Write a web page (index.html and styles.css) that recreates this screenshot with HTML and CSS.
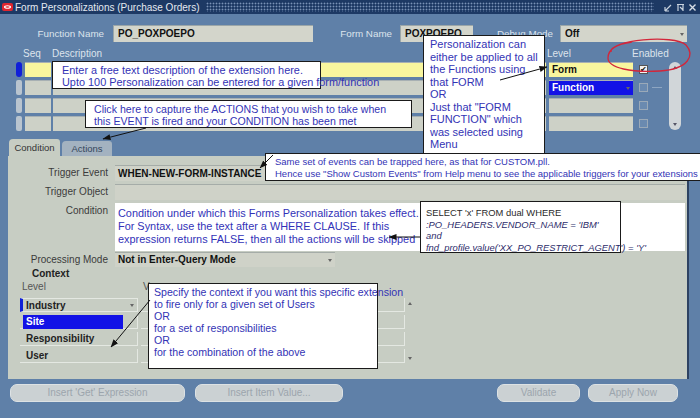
FILE: index.html
```html
<!DOCTYPE html>
<html>
<head>
<meta charset="utf-8">
<title>Form Personalizations</title>
<link rel="stylesheet" href="styles.css">
</head>
<body>
<div class="window">
  <div class="titlebar">
    <svg class="logo" width="11" height="8" viewBox="0 0 11 8"><rect x="0" y="0" width="11" height="8" rx="2" fill="#e0262f"/><ellipse cx="5.5" cy="4" rx="3.6" ry="1.8" fill="#fff"/><ellipse cx="5.5" cy="4" rx="2.2" ry="0.8" fill="#e0262f"/></svg>
    <span class="title">Form Personalizations (Purchase Orders)</span>
    <span class="dots"></span>
    <span class="ctl">
      <svg width="9" height="9" viewBox="0 0 9 9"><path d="M1 8 L7 2 M1 8 H5 M1 8 V4" stroke="#c9d3df" stroke-width="1.2" fill="none"/></svg>
      <svg width="9" height="9" viewBox="0 0 9 9"><path d="M1 1.5 H8 M2 1.5 V8 M7 1.5 V8 M4 4 L7 7" stroke="#c9d3df" stroke-width="1.2" fill="none"/></svg>
      <svg width="9" height="9" viewBox="0 0 9 9"><path d="M1.5 1.5 L7.5 7.5 M7.5 1.5 L1.5 7.5" stroke="#d7dee7" stroke-width="1.4" fill="none"/></svg>
    </span>
  </div>

  <div class="toprow">
    <span class="lbl l-fn">Function Name</span>
    <div class="field f-fn">PO_POXPOEPO</div>
    <span class="lbl l-fm">Form Name</span>
    <div class="field f-fm">POXPOEPO</div>
    <span class="lbl l-dm">Debug Mode</span>
    <div class="field f-dm">Off<span class="dd"></span></div>
  </div>

  <div class="table">
    <div class="cols">
      <div class="thead">
        <span class="h-seq">Seq</span>
        <span class="h-desc">Description</span>
        <span class="h-level">Level</span>
        <span class="h-en">Enabled</span>
      </div>
      <div class="trow">
        <span class="ind cur"></span>
        <span class="cell seq yellow"></span>
        <span class="cell desc yellow"></span>
        <span class="cell level yellow bold">Form</span>
        <span class="en"><span class="cb checked">&#10004;</span></span>
      </div>
      <div class="trow">
        <span class="ind"></span>
        <span class="cell seq"></span>
        <span class="cell desc"></span>
        <span class="cell level sel bold">Function<span class="dd"></span></span>
        <span class="en"><span class="cb"></span><span class="dash"></span></span>
      </div>
      <div class="trow">
        <span class="ind"></span>
        <span class="cell seq"></span>
        <span class="cell desc"></span>
        <span class="cell level"></span>
        <span class="en"><span class="cb"></span></span>
      </div>
      <div class="trow">
        <span class="ind"></span>
        <span class="cell seq"></span>
        <span class="cell desc"></span>
        <span class="cell level"></span>
        <span class="en"><span class="cb"></span></span>
      </div>
    </div>
    <div class="vscroll"><span class="up"></span><span class="down"></span></div>
  </div>

  <div class="tabs">
    <span class="tab active">Condition</span>
    <span class="tab">Actions</span>
  </div>

  <div class="panel">
    <div class="prow">
      <span class="plabel">Trigger Event</span>
      <div class="pfield yellow bold w-te">WHEN-NEW-FORM-INSTANCE</div>
    </div>
    <div class="prow">
      <span class="plabel">Trigger Object</span>
      <div class="pfield w-to"></div>
    </div>
    <div class="prow">
      <span class="plabel">Condition</span>
      <div class="pfield cond">Condition under which this Forms Personalization takes effect.<br>For Syntax, use the text after a WHERE CLAUSE. If this<br>expression returns FALSE, then all the actions will be skipped</div>
    </div>
    <div class="prow pm">
      <span class="plabel">Processing Mode</span>
      <div class="pfield yellow bold w-pm">Not in Enter-Query Mode<span class="dd"></span></div>
    </div>
    <div class="ctxhead">Context</div>
    <div class="ctx">
      <div class="ctxcol lvl">
        <span class="ctxh">Level</span>
        <div class="crow ind-row bold">Industry<span class="dd"></span></div>
        <div class="crow"><span class="siteb bold">Site</span></div>
        <div class="crow bold">Responsibility</div>
        <div class="crow bold">User</div>
      </div>
      <div class="ctxcol val">
        <span class="ctxh">V</span>
        <div class="crow"></div>
        <div class="crow"></div>
        <div class="crow"></div>
        <div class="crow"></div>
      </div>
      <div class="cscroll"><span class="up"></span><span class="down"></span></div>
    </div>
  </div>

  <div class="buttons">
    <span class="btn b1">Insert 'Get' Expression</span>
    <span class="btn b2">Insert Item Value...</span>
    <span class="btn b3">Validate</span>
    <span class="btn b4">Apply Now</span>
  </div>

  <div class="tip t1">Enter a free text description of the extension here.<br>Upto 100 Personalization can be entered for a given form/function</div>
  <div class="tip t2">Click here to capture the ACTIONS that you wish to take when<br>this EVENT is fired and your CONDITION has been met</div>
  <div class="tip t3">Personalization can<br>either be applied to all<br>the Functions using<br>that FORM<br>OR<br>Just that "FORM<br>FUNCTION" which<br>was selected using<br>Menu</div>
  <div class="tip t4">Same set of events can be trapped here, as that for CUSTOM.pll.<br>Hence use "Show Custom Events" from Help menu to see the applicable triggers for your extensions</div>
  <div class="tip sql"><span class="sq1">SELECT 'x' FROM dual WHERE</span><br><i>:PO_HEADERS.VENDOR_NAME = 'IBM'</i><br><i>and</i><br><i>fnd_profile.value('XX_PO_RESTRICT_AGENT') = 'Y'</i></div>
  <div class="tip t5">Specify the context if you want this specific extension<br>to fire only for a given set of Users<br>OR<br>for a set of responsibilities<br>OR<br>for the combination of the above</div>

  <svg class="marks" width="700" height="418" viewBox="0 0 700 418">
    <defs>
      <marker id="ah" markerWidth="8" markerHeight="6" refX="7.5" refY="3" orient="auto" markerUnits="userSpaceOnUse">
        <path d="M0,0 L8,3 L0,6 z" fill="#111"/>
      </marker>
    </defs>
    <g stroke="#111" stroke-width="1" fill="none">
      <line x1="146" y1="128" x2="103" y2="139" marker-end="url(#ah)"/>
      <line x1="500" y1="80" x2="547" y2="67" marker-end="url(#ah)"/>
      <line x1="273" y1="155" x2="260" y2="168" marker-end="url(#ah)"/>
      <line x1="420" y1="237" x2="389" y2="237" marker-end="url(#ah)"/>
      <line x1="150" y1="300" x2="111" y2="347" marker-end="url(#ah)"/>
    </g>
    <path d="M611 52 C609 40 674 34 686 45 C695 55 689 69 660 71 C632 73 608 68 608 58 C608 50 616 44 632 42" stroke="#d3263a" stroke-width="1.3" fill="none"/>
  </svg>
</div>
</body>
</html>
```

FILE: styles.css
```css
* { box-sizing: border-box; margin: 0; padding: 0; }
html, body { width: 700px; height: 418px; overflow: hidden; }
body {
  background: #5f80a8;
  font-family: "Liberation Sans", Arial, sans-serif;
}
.window {
  position: relative;
  width: 700px;
  height: 418px;
  overflow: hidden;
  background: #5f80a8;
}

/* title bar */
.titlebar {
  display: flex;
  align-items: center;
  height: 14px;
  background: #1d3964;
}
.logo { margin-left: 2px; flex: none; }
.title {
  color: #e4e9f0;
  font-size: 10px;
  margin-left: 2px;
  white-space: nowrap;
}
.dots {
  flex: 1;
  height: 10px;
  margin: 0 10px 0 6px;
  background-image: radial-gradient(circle, #7a92b6 0.8px, transparent 1.1px);
  background-size: 3px 3px;
}
.ctl { display: flex; gap: 3px; margin-right: 3px; }

/* top row */
.toprow {
  display: flex;
  align-items: center;
  height: 17px;
  margin-top: 11px;
}
.lbl {
  color: #dde4ec;
  font-size: 9.8px;
  text-align: right;
  white-space: nowrap;
}
.l-fn { width: 104px; }
.l-fm { width: 79px; }
.l-dm { width: 80px; }
.field {
  position: relative;
  height: 17px;
  background: #d3d5cb;
  border-top: 1px solid #9ba6a8;
  border-left: 1px solid #9ba6a8;
  font-size: 10px;
  font-weight: bold;
  color: #111;
  padding-left: 4px;
  line-height: 15px;
}
.f-fn { margin-left: 9px; width: 200px; }
.f-fm { margin-left: 8px; width: 73px; }
.f-dm { margin-left: 7px; width: 127px; }

.dd {
  position: absolute;
  right: 3px;
  top: 50%;
  margin-top: -1px;
  width: 0;
  height: 0;
  border-left: 2.5px solid transparent;
  border-right: 2.5px solid transparent;
  border-top: 3px solid #666;
}

/* multi-row table */
.table {
  display: flex;
  margin-left: 16px;
}
.cols { display: flex; flex-direction: column; }
.thead {
  position: relative;
  height: 20px;
  font-size: 10px;
  color: #dde4ec;
}
.thead span { position: absolute; top: 6px; }
.h-seq { left: 7px; }
.h-desc { left: 36px; }
.h-level { left: 531px; }
.h-en { left: 616px; }
.trow {
  display: flex;
  height: 15px;
  margin-bottom: 3px;
}
.ind {
  width: 6px;
  background: #b9c4cf;
  border-radius: 2px;
}
.ind.cur { background: #1020d8; border-radius: 3px; }
.cell {
  position: relative;
  height: 15px;
  background: #cdd1c7;
  border-top: 1px solid #a7b0b3;
  font-size: 10px;
  color: #111;
  line-height: 14px;
  padding-left: 3px;
}
.seq { margin-left: 3px; width: 26px; }
.desc { margin-left: 2px; width: 493px; color: #333; }
.level { margin-left: 3px; width: 84px; }
.yellow { background: #f8f69e; }
.bold { font-weight: bold; }
.sel { background: #1212e6; color: #fff; }
.en {
  display: flex;
  align-items: center;
  margin-left: 6px;
  width: 24px;
}
.cb {
  display: inline-block;
  width: 9px;
  height: 9px;
  border: 1px solid #9aa9b8;
  background: #6a8ab0;
  font-size: 8px;
  line-height: 7px;
  text-align: center;
  color: #111;
}
.cb.checked { background: #f2f2f2; border-color: #555; }
.dash {
  display: inline-block;
  width: 10px;
  height: 1px;
  margin-left: 4px;
  background: #8ea6c2;
}
.vscroll {
  position: relative;
  width: 12px;
  height: 68px;
  margin-top: 20px;
  margin-left: 6px;
  background: #d1d6d9;
  border-radius: 6px;
}
.up, .down {
  position: absolute;
  left: 50%;
  margin-left: -2.5px;
  width: 0;
  height: 0;
  border-left: 2.5px solid transparent;
  border-right: 2.5px solid transparent;
}
.vscroll .up { top: 4px; border-bottom: 3px solid #556; }
.vscroll .down { bottom: 4px; border-top: 3px solid #556; }

/* tabs */
.tabs {
  display: flex;
  align-items: flex-end;
  height: 17px;
  margin-top: 5px;
  margin-left: 9px;
}
.tab {
  height: 15px;
  width: 50px;
  margin-right: 2px;
  background: #a3b2c0;
  color: #34465a;
  font-size: 9.5px;
  text-align: center;
  line-height: 15px;
  border-radius: 4px 3px 0 0;
}
.tab.active {
  height: 17px;
  background: #c7cdc3;
  color: #333;
  line-height: 17px;
  width: 51px;
}

/* panel */
.panel {
  width: 681px;
  height: 223px;
  margin-left: 8px;
  background: #c7cdc3;
  padding-top: 9px;
  border-right: 2px solid #2d4262;
}
.prow { display: flex; margin-bottom: 3px; }
.plabel {
  width: 100px;
  text-align: right;
  font-size: 10px;
  color: #3b3b3b;
  line-height: 16px;
  white-space: nowrap;
}
.pfield {
  position: relative;
  margin-left: 7px;
  height: 16px;
  background: #cfd2c8;
  border-top: 1px solid #a5aca8;
  font-size: 10px;
  color: #111;
  padding-left: 3px;
  line-height: 15px;
}
.w-te { width: 305px; }
.w-to { width: 570px; }
.w-pm { width: 220px; height: 15px; line-height: 14px; }
.cond {
  width: 570px;
  height: 48px;
  background: #fff;
  border: none;
  color: #3232b8;
  font-size: 10.9px;
  padding: 4px 0 0 3px;
  line-height: 13px;
  white-space: nowrap;
}
.prow.pm { margin-top: -2px; margin-bottom: 0; }
.ctxhead {
  margin-left: 24px;
  height: 12px;
  font-size: 10px;
  font-weight: bold;
  color: #222;
  line-height: 12px;
}
.ctx {
  display: flex;
  margin-left: 12px;
}
.ctxcol { display: flex; flex-direction: column; }
.ctxh {
  height: 18px;
  font-size: 10px;
  color: #555;
  line-height: 14px;
  padding-left: 2px;
}
.crow {
  position: relative;
  height: 14px;
  margin-bottom: 3px;
  font-size: 10px;
  color: #222;
  line-height: 14px;
  padding-left: 6px;
  border-bottom: 1px solid #e4e8e2;
  border-right: 1px solid #e4e8e2;
}
.lvl { width: 118px; }
.ind-row { border-left: 3px solid #1020d8; padding-left: 3px; border-top: 1px solid #e4e8e2; }
.siteb {
  display: block;
  margin-left: -3px;
  width: 100px;
  background: #1212e6;
  color: #fff;
  padding-left: 3px;
}
.val { width: 264px; margin-left: 3px; }
.cscroll {
  position: relative;
  width: 9px;
  height: 66px;
  margin-top: 18px;
  margin-left: 1px;
}
.cscroll .up { top: 4px; border-bottom: 3px solid #666; }
.cscroll .down { bottom: 4px; border-top: 3px solid #666; }

/* buttons */
.buttons {
  display: flex;
  margin-top: 5px;
}
.btn {
  height: 18px;
  background: #cbd1d3;
  border: 1px solid #dde2e4;
  border-radius: 7px;
  color: #9ca5ad;
  font-size: 10px;
  text-align: center;
  line-height: 16px;
}
.b1 { margin-left: 10px; width: 175px; }
.b2 { margin-left: 10px; width: 148px; }
.b3 { margin-left: 154px; width: 83px; }
.b4 { margin-left: 8px; width: 90px; }

/* annotation callouts */
.tip {
  position: absolute;
  background: #fff;
  border: 1px solid #1a1a1a;
  color: #3333b5;
  font-size: 10.5px;
  line-height: 12.4px;
  white-space: nowrap;
}
.t1 { left: 52px; top: 61px; width: 269px; height: 28px; padding: 2px 0 0 9px; font-size: 10.9px; }
.t2 { left: 85px; top: 100px; width: 327px; height: 28px; padding: 2px 0 0 8px; font-size: 10.6px; }
.t3 { left: 423px; top: 35px; width: 122px; height: 119px; padding: 2px 0 0 6px; line-height: 12.5px; font-size: 11px; }
.t4 { left: 265px; top: 153px; width: 450px; height: 28px; padding: 2px 0 0 9px; font-size: 9.5px; line-height: 12px; }
.sql {
  left: 420px; top: 201px; width: 201px; height: 52px;
  padding: 5px 0 0 5px;
  color: #2c2c6a;
  font-size: 9.4px;
  line-height: 11.5px;
}
.sq1 { color: #2a2a2a; }
.t5 { left: 148px; top: 283px; width: 230px; height: 86px; padding: 3px 0 0 5px; line-height: 11.9px; font-size: 10.6px; }

.marks {
  position: absolute;
  left: 0;
  top: 0;
  pointer-events: none;
}
```
